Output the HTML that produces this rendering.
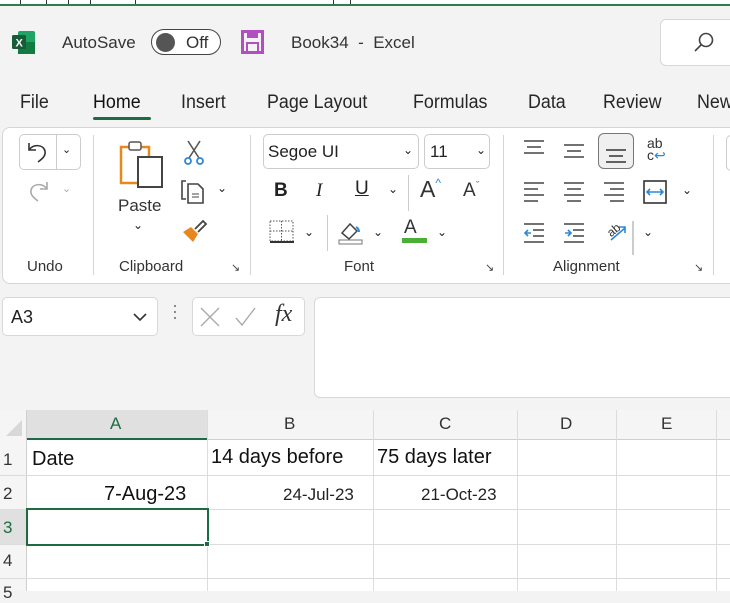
<!DOCTYPE html>
<html><head><meta charset="utf-8"><style>
*{margin:0;padding:0;box-sizing:border-box}
body{width:730px;height:591px;overflow:hidden;background:#f3f3f3;font-family:"Liberation Sans",sans-serif;color:#222;position:relative}
.a{position:absolute;white-space:nowrap}
.t{font-size:17px;color:#333}
.tab{font-size:19px;top:92px;color:#262626;transform:scaleX(0.94);transform-origin:left}
.lbl{font-size:15px;top:258px;color:#333}
.sep{position:absolute;width:1px;background:#d4d4d4}
.g{position:absolute;background:#dcdcdc}
.cell{font-size:20px;color:#111}
</style></head><body>
<!-- top strip -->
<div class="a" style="left:0;top:0;width:730px;height:6px;background:#fff;border-bottom:2px solid #2e7d4f"></div>
<div class="a" style="left:20px;top:0;width:1px;height:4px;background:#333;box-shadow:26px 0 #333,48px 0 #333,70px 0 #333,115px 0 #333,313px 0 #333,330px 0 #333"></div>
<!-- title bar -->
<svg class="a" style="left:12px;top:30px" width="24" height="25"><rect x="6" y="1" width="17" height="23" rx="2" fill="#21a366"/><rect x="6" y="12" width="17" height="12" fill="#107c41"/><rect x="0" y="5" width="14" height="14" rx="1.5" fill="#185c37"/><text x="3.5" y="16.5" font-size="11" fill="#fff" font-family="Liberation Sans" font-weight="bold">X</text></svg>
<div class="a t" style="left:62px;top:33px">AutoSave</div>
<div class="a" style="left:151px;top:29px;width:70px;height:26px;border:1.5px solid #444;border-radius:13px;background:#fff"></div>
<div class="a" style="left:156px;top:33px;width:19px;height:19px;border-radius:50%;background:#555"></div>
<div class="a t" style="left:186px;top:33px">Off</div>
<svg class="a" style="left:241px;top:30px" width="23" height="24"><rect x="1.5" y="1.5" width="20" height="21" fill="none" stroke="#b04fbd" stroke-width="3"/><rect x="6" y="1" width="11" height="7" fill="#b04fbd"/><rect x="6" y="13" width="11" height="9" fill="none" stroke="#b04fbd" stroke-width="2"/></svg>
<div class="a t" style="left:291px;top:33px">Book34 &nbsp;- &nbsp;Excel</div>
<div class="a" style="left:660px;top:19px;width:80px;height:47px;background:#fff;border:1px solid #d8d8d8;border-radius:6px"></div>
<svg class="a" style="left:693px;top:31px" width="22" height="22"><circle cx="13" cy="9" r="6.5" fill="none" stroke="#444" stroke-width="1.6"/><line x1="8.5" y1="13.5" x2="2" y2="20" stroke="#444" stroke-width="1.6"/></svg>
<!-- tabs -->
<div class="a tab" style="left:20px">File</div>
<div class="a tab" style="left:93px;color:#111">Home</div>
<div class="a" style="left:93px;top:117px;width:58px;height:3px;background:#1e6b42;border-radius:2px"></div>
<div class="a tab" style="left:181px">Insert</div>
<div class="a tab" style="left:267px">Page Layout</div>
<div class="a tab" style="left:413px">Formulas</div>
<div class="a tab" style="left:528px">Data</div>
<div class="a tab" style="left:603px">Review</div>
<div class="a tab" style="left:697px">New</div>
<!-- ribbon -->
<div class="a" style="left:2px;top:127px;width:740px;height:157px;background:#fff;border:1.5px solid #d6d6d6;border-radius:8px"></div>
<div class="sep" style="left:93px;top:135px;height:140px"></div>
<div class="sep" style="left:250px;top:135px;height:140px"></div>
<div class="sep" style="left:503px;top:135px;height:140px"></div>
<div class="sep" style="left:713px;top:135px;height:140px"></div>
<!-- undo -->
<div class="a" style="left:19px;top:134px;width:62px;height:36px;border:1px solid #ccc;border-radius:5px"></div>
<div class="a" style="left:56px;top:134px;width:1px;height:36px;background:#ccc"></div>
<svg class="a" style="left:25px;top:139px" width="26" height="26"><path d="M4 4v7h7" fill="none" stroke="#333" stroke-width="1.6"/><path d="M4 11c4-6 14-6 16 1c1 5-3 8-7 11" fill="none" stroke="#333" stroke-width="1.6"/></svg>
<div class="a" style="left:62px;top:143px;font-size:11px">⌄</div>
<svg class="a" style="left:25px;top:178px" width="26" height="26"><path d="M22 4v7h-7" fill="none" stroke="#aaa" stroke-width="1.6"/><path d="M22 11c-4-6-14-6-16 1c-1 5 3 8 7 11" fill="none" stroke="#aaa" stroke-width="1.6"/></svg>
<div class="a" style="left:62px;top:182px;font-size:11px;color:#aaa">⌄</div>
<div class="a lbl" style="left:27px">Undo</div>
<!-- clipboard -->
<svg class="a" style="left:118px;top:138px" width="48" height="56"><rect x="3" y="9" width="28" height="36" fill="none" stroke="#e8871e" stroke-width="2.5"/><rect x="11" y="4" width="12" height="8" rx="2" fill="#fff" stroke="#555" stroke-width="1.5"/><rect x="20" y="19" width="24" height="30" fill="#fff" stroke="#444" stroke-width="2"/></svg>
<div class="a" style="left:118px;top:196px;font-size:17px;color:#333">Paste</div>
<div class="a" style="left:133px;top:218px;font-size:12px">⌄</div>
<svg class="a" style="left:183px;top:140px" width="22" height="26"><path d="M5 1l11 17M17 1L6 18" stroke="#555" stroke-width="1.6"/><circle cx="5" cy="21" r="3" fill="none" stroke="#2b88d8" stroke-width="1.8"/><circle cx="17" cy="21" r="3" fill="none" stroke="#2b88d8" stroke-width="1.8"/></svg>
<svg class="a" style="left:180px;top:178px" width="26" height="26"><path d="M6 3h-4v18h4" fill="none" stroke="#444" stroke-width="1.6"/><path d="M8 6h10l5 5v14h-15z" fill="none" stroke="#444" stroke-width="1.6"/><path d="M12 16h7M12 19h7" stroke="#444"/></svg>
<div class="a" style="left:217px;top:181px;font-size:12px">⌄</div>
<svg class="a" style="left:180px;top:219px" width="28" height="26"><path d="M3 13l10 10l5-8l-7-7z" fill="#e8871e"/><path d="M15 10l8-8l3 3l-8 8" fill="none" stroke="#444" stroke-width="1.8"/></svg>
<div class="a lbl" style="left:119px">Clipboard</div>
<div class="a" style="left:231px;top:261px;font-size:11px;color:#444">↘</div>
<!-- font -->
<div class="a" style="left:263px;top:134px;width:156px;height:35px;border:1px solid #ccc;border-radius:5px"></div>
<div class="a" style="left:268px;top:142px;font-size:17px;color:#222">Segoe UI</div>
<div class="a" style="left:403px;top:143px;font-size:12px">⌄</div>
<div class="a" style="left:424px;top:134px;width:66px;height:35px;border:1px solid #ccc;border-radius:5px"></div>
<div class="a" style="left:430px;top:142px;font-size:17px;color:#222">11</div>
<div class="a" style="left:476px;top:143px;font-size:12px">⌄</div>
<div class="a" style="left:274px;top:180px;font-size:19px;font-weight:bold">B</div>
<div class="a" style="left:316px;top:180px;font-size:19px;font-style:italic;font-family:'Liberation Serif',serif">I</div>
<div class="a" style="left:355px;top:178px;font-size:19px;text-decoration:underline">U</div>
<div class="a" style="left:388px;top:182px;font-size:12px">⌄</div>
<div class="sep" style="left:408px;top:175px;height:36px;background:#ccc"></div>
<div class="a" style="left:420px;top:176px;font-size:23px;color:#333">A<span style="font-size:12px;color:#2b88d8;vertical-align:top">^</span></div>
<div class="a" style="left:463px;top:180px;font-size:19px;color:#333">A<span style="font-size:11px;color:#2b88d8;vertical-align:top">ˇ</span></div>
<svg class="a" style="left:269px;top:220px" width="26" height="25"><rect x="1" y="1" width="23" height="20" fill="none" stroke="#555" stroke-dasharray="1.5 1.5"/><path d="M12.5 1v20M1 11h23" stroke="#555" stroke-dasharray="1.5 1.5"/><path d="M1 22h24" stroke="#333" stroke-width="2"/></svg>
<div class="a" style="left:304px;top:225px;font-size:12px">⌄</div>
<div class="sep" style="left:327px;top:215px;height:36px;background:#ccc"></div>
<svg class="a" style="left:338px;top:219px" width="26" height="26"><path d="M4 14l8-9l7 7l-8 8z" fill="none" stroke="#444" stroke-width="1.5"/><path d="M18 8c2 1 3 3 3 5" stroke="#2b88d8" stroke-width="2" fill="none"/><rect x="1" y="21" width="23" height="4" fill="#fff" stroke="#777"/></svg>
<div class="a" style="left:373px;top:225px;font-size:12px">⌄</div>
<div class="a" style="left:404px;top:217px;font-size:19px;color:#333">A</div>
<div class="a" style="left:402px;top:238px;width:25px;height:5px;background:#4caf35"></div>
<div class="a" style="left:437px;top:225px;font-size:12px">⌄</div>
<div class="a lbl" style="left:344px">Font</div>
<div class="a" style="left:485px;top:261px;font-size:11px;color:#444">↘</div>
<!-- alignment -->
<svg class="a" style="left:520px;top:135px" width="200" height="120" fill="none" stroke="#444" stroke-width="1.6">
<path d="M4 6h20M7 12h14M4 18h20"/>
<path d="M44 10h20M47 16h14M44 22h20"/>
<path d="M4 48h20M4 54h14M4 60h20M4 66h14"/>
<path d="M44 48h20M47 54h14M44 60h20M47 66h14"/>
<path d="M84 48h20M90 54h14M84 60h20M90 66h14"/>
<path d="M4 89h20M13 95h11M13 101h11M4 107h20"/>
<path d="M44 89h20M53 95h11M53 101h11M44 107h20"/>
<path stroke="#2b88d8" d="M11 98h-6M8 95l-3 3l3 3M45 98h6M48 95l3 3l-3 3"/>
<rect x="124" y="46" width="22" height="22" stroke="#333"/>
<path stroke="#2b88d8" d="M127 57h16M130 54l-3 3l3 3M140 54l3 3l-3 3"/>
<path stroke="#2b88d8" d="M91 105l14-12M99 92h6v6"/>
<path stroke="#999" stroke-width="1" d="M113 86v38"/>
</svg>
<div class="a" style="left:598px;top:133px;width:36px;height:36px;border:1.5px solid #777;border-radius:6px;background:#f0f0f0"></div>
<svg class="a" style="left:603px;top:138px" width="26" height="26" fill="none" stroke="#333" stroke-width="1.6"><path d="M3 12h20M6 18h14M3 24h20"/></svg>
<div class="a" style="left:647px;top:137px;font-size:14px;line-height:12px;color:#333">ab<br>c<span style="color:#2b88d8">↩</span></div>
<div class="a" style="left:682px;top:183px;font-size:12px">⌄</div>
<div class="a" style="left:607px;top:223px;font-size:12px;color:#333;transform:rotate(-40deg)">ab</div>
<div class="a" style="left:643px;top:225px;font-size:12px">⌄</div>
<div class="a lbl" style="left:553px">Alignment</div>
<div class="a" style="left:694px;top:261px;font-size:11px;color:#444">↘</div>
<div class="a" style="left:726px;top:135px;width:20px;height:36px;border:1px solid #ccc;border-radius:5px"></div>
<!-- formula bar -->
<div class="a" style="left:2px;top:297px;width:156px;height:39px;background:#fff;border:1px solid #d8d8d8;border-radius:5px"></div>
<div class="a" style="left:11px;top:307px;font-size:18px;color:#222">A3</div>
<svg class="a" style="left:133px;top:312px" width="14" height="10"><path d="M1 2l6 6l6-6" fill="none" stroke="#333" stroke-width="1.6"/></svg>
<div class="a" style="left:174px;top:305px;width:2px;height:2px;background:#888;box-shadow:0 6px #888,0 12px #888"></div>
<div class="a" style="left:192px;top:297px;width:113px;height:39px;background:#fff;border:1px solid #d8d8d8;border-radius:5px"></div>
<svg class="a" style="left:198px;top:305px" width="70" height="24" fill="none" stroke="#aaa" stroke-width="1.4"><path d="M3 3l18 18M21 3L3 21"/><path d="M38 13l6 7l13-17"/></svg>
<div class="a" style="left:275px;top:301px;font-size:24px;font-style:italic;font-family:'Liberation Serif',serif;color:#333">fx</div>
<div class="a" style="left:314px;top:297px;width:430px;height:101px;background:#fff;border:1px solid #d8d8d8;border-radius:6px"></div>
<!-- grid -->
<div class="a" style="left:0;top:410px;width:730px;height:181px;background:#fff"></div>
<div class="a" style="left:0;top:410px;width:730px;height:30px;background:#f5f5f5;border-bottom:1px solid #cfcfcf"></div>
<div class="a" style="left:0;top:410px;width:27px;height:181px;background:#f5f5f5;border-right:1px solid #cfcfcf"></div>
<svg class="a" style="left:4px;top:418px" width="20" height="20"><path d="M18 2v16h-16z" fill="#d8d8d8"/></svg>
<div class="a" style="left:27px;top:410px;width:180px;height:30px;background:#e0e0e0;border-bottom:2px solid #1e6b42"></div>
<div class="a" style="left:0;top:509px;width:27px;height:35px;background:#e0e0e0"></div>
<div class="g" style="left:207px;top:410px;width:1px;height:181px"></div>
<div class="g" style="left:373px;top:410px;width:1px;height:181px"></div>
<div class="g" style="left:517px;top:410px;width:1px;height:181px"></div>
<div class="g" style="left:616px;top:410px;width:1px;height:181px"></div>
<div class="g" style="left:716px;top:410px;width:1px;height:181px"></div>
<div class="g" style="left:0;top:475px;width:730px;height:1px"></div>
<div class="g" style="left:0;top:509px;width:730px;height:1px"></div>
<div class="g" style="left:0;top:544px;width:730px;height:1px"></div>
<div class="g" style="left:0;top:578px;width:730px;height:1px"></div>
<div class="a" style="left:110px;top:414px;font-size:17px;color:#1e6b42">A</div>
<div class="a" style="left:284px;top:414px;font-size:17px;color:#333">B</div>
<div class="a" style="left:439px;top:414px;font-size:17px;color:#333">C</div>
<div class="a" style="left:560px;top:414px;font-size:17px;color:#333">D</div>
<div class="a" style="left:661px;top:414px;font-size:17px;color:#333">E</div>
<div class="a" style="left:3px;top:450px;font-size:17px;color:#333">1</div>
<div class="a" style="left:3px;top:484px;font-size:17px;color:#333">2</div>
<div class="a" style="left:3px;top:518px;font-size:17px;color:#1e6b42">3</div>
<div class="a" style="left:3px;top:551px;font-size:17px;color:#333">4</div>
<div class="a" style="left:3px;top:583px;font-size:17px;color:#333">5</div>
<div class="a cell" style="left:32px;top:448px">Date</div>
<div class="a cell" style="left:211px;top:446px">14 days before</div>
<div class="a cell" style="left:377px;top:446px">75 days later</div>
<div class="a cell" style="left:104px;top:483px">7-Aug-23</div>
<div class="a" style="left:283px;top:485px;font-size:17px">24-Jul-23</div>
<div class="a" style="left:421px;top:485px;font-size:17px">21-Oct-23</div>
<div class="a" style="left:26px;top:508px;width:183px;height:38px;border:2px solid #1e6b42"></div>
<div class="a" style="left:204px;top:541px;width:6px;height:6px;background:#1e6b42;border:1px solid #fff"></div>
</body></html>
